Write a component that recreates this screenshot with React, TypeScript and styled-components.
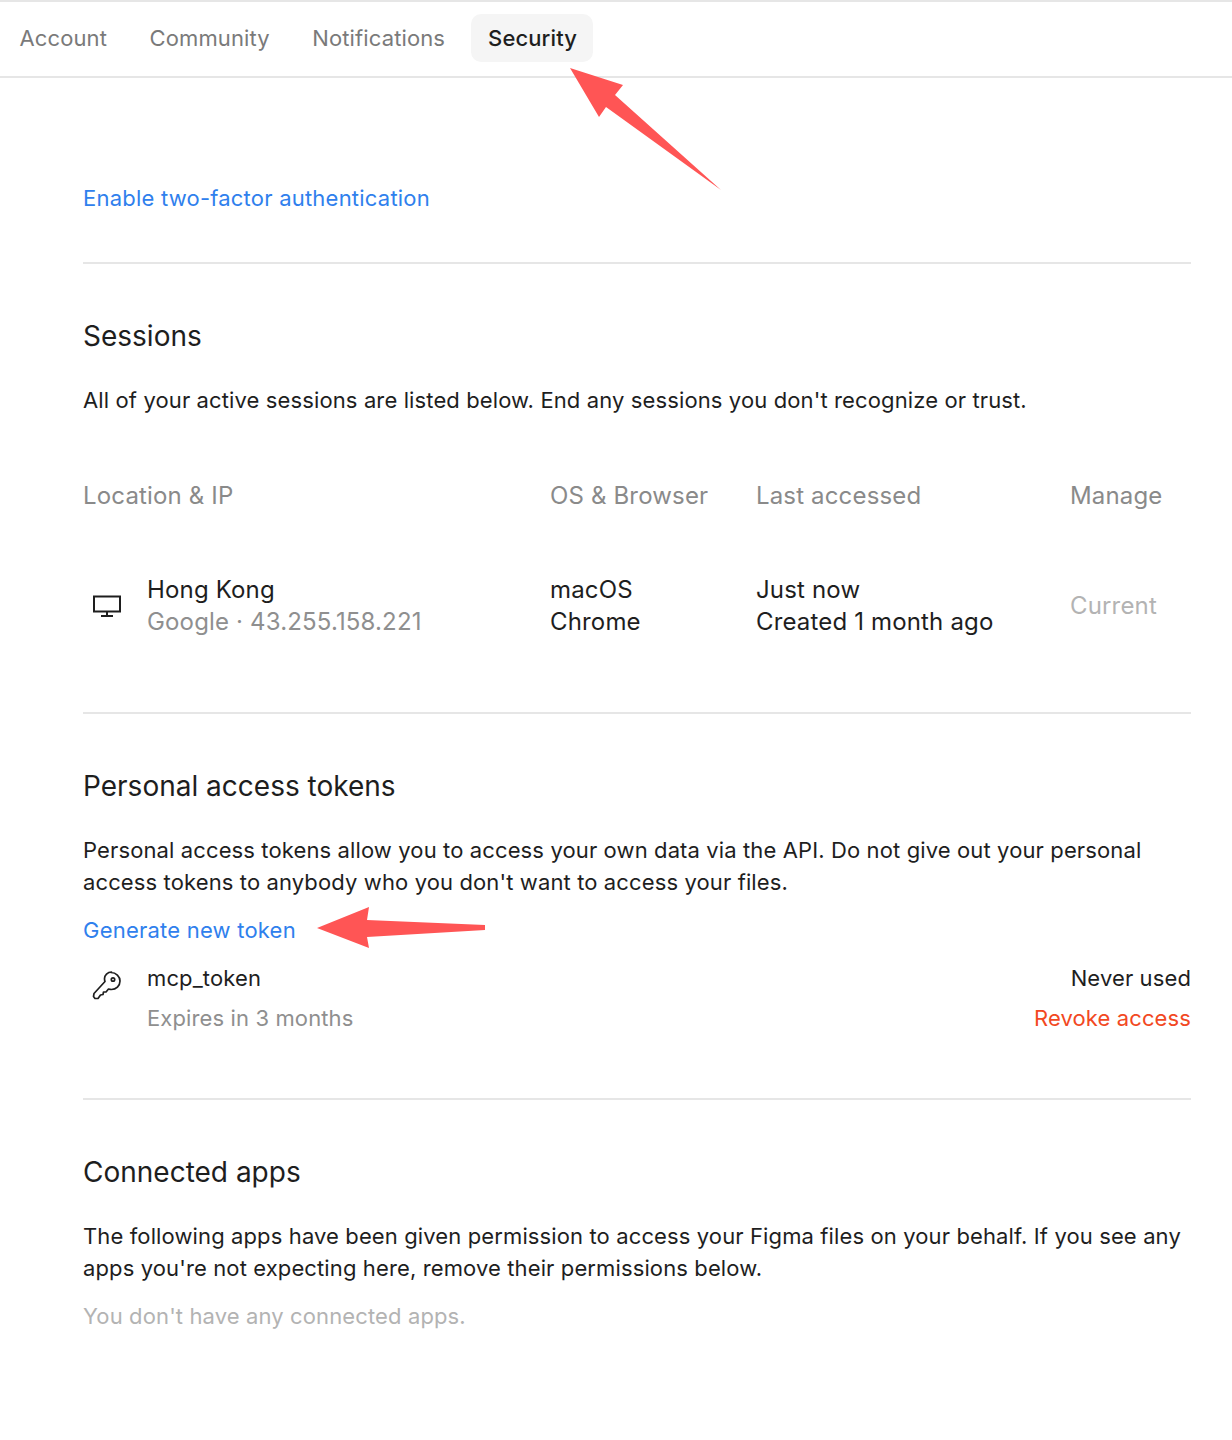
import React from 'react';
import styled, { createGlobalStyle } from 'styled-components';

const GlobalStyle = createGlobalStyle`
  html, body {
    margin: 0;
    background: #fff;
  }
  body {
    font-family: Inter, "Liberation Sans", sans-serif;
    color: #1e1e1e;
  }
`;

const Page = styled.div`
  position: relative;
  width: 1232px;
  height: 1440px;
  overflow: hidden;
  background: #fff;
  font-size: 22px;
  line-height: 32px;
  letter-spacing: 0.12px;
`;

const TabBar = styled.nav`
  display: flex;
  align-items: center;
  height: 74px;
  padding-left: 3px;
  border-top: 2px solid #e6e6e6;
  border-bottom: 2px solid #e6e6e6;
`;

const Tab = styled.div<{ $active?: boolean }>`
  display: flex;
  align-items: center;
  justify-content: center;
  height: 48px;
  margin-top: -2px;
  margin-right: ${(p) => (p.$active ? 0 : '9.5px')};
  padding: ${(p) => (p.$active ? '0 16px 0 17px' : '0 16.5px')};
  border-radius: 10px;
  background: ${(p) => (p.$active ? '#f5f5f5' : 'transparent')};
  color: ${(p) => (p.$active ? '#1e1e1e' : '#7a7a7a')};
  font-weight: ${(p) => (p.$active ? 500 : 400)};
`;

const Content = styled.main`
  margin: 0 41px 0 83px;
`;

const IntroSection = styled.section`
  padding: 104px 0 48px;
  border-bottom: 2px solid #e6e6e6;
`;

const Section = styled.section<{ $bottom?: number; $rule?: boolean }>`
  padding-top: 56px;
  padding-bottom: ${(p) => p.$bottom ?? 0}px;
  border-bottom: ${(p) => (p.$rule ? '2px solid #e6e6e6' : 'none')};
`;

const ActionLink = styled.a<{ $top?: number }>`
  display: block;
  margin-top: ${(p) => p.$top ?? 0}px;
  color: #2f80ed;
  letter-spacing: 0.22px;
`;

const Heading = styled.h2`
  margin: 0;
  font-size: 28px;
  line-height: 32px;
  font-weight: 400;
  letter-spacing: 0;
  color: #1e1e1e;
`;

const Copy = styled.p`
  margin: 32px 0 0;
  color: #1e1e1e;
`;

const SessionGrid = styled.div`
  display: grid;
  grid-template-columns: 467px 206px 314px 1fr;
  margin-top: 64px;
  font-size: 24px;
  letter-spacing: 0.16px;
`;

const ColumnLabel = styled.div`
  color: #8a8a8a;
  margin-bottom: 62px;
`;

const Entry = styled.div<{ $top?: boolean }>`
  display: flex;
  align-items: ${(p) => (p.$top ? 'flex-start' : 'center')};
  gap: 16px;
`;

const IconSlot = styled.div<{ $offset?: number }>`
  display: flex;
  justify-content: center;
  width: 48px;
  margin-top: ${(p) => p.$offset ?? 0}px;
  color: #1e1e1e;
`;

const Muted = styled.div`
  color: #8f8f8f;
`;

const Faint = styled.div<{ $top?: number }>`
  color: #b3b3b3;
  margin-top: ${(p) => p.$top ?? 0}px;
`;

const CenterCell = styled.div`
  display: flex;
  align-items: center;
  height: 64px;
`;

const TokenRow = styled.div`
  display: flex;
  justify-content: space-between;
  margin-top: 16px;
`;

const TokenLine = styled.div`
  height: 40px;
`;

const TokenNote = styled(TokenLine)`
  color: #8f8f8f;
`;

const TokenRevoke = styled(TokenLine)`
  color: #f24822;
`;

const RightText = styled.div`
  text-align: right;
`;

const Arrows = styled.svg`
  position: absolute;
  left: 0;
  top: 0;
  pointer-events: none;
`;

export default function App() {
  return (
    <Page>
      <GlobalStyle />
      <TabBar>
        <Tab>Account</Tab>
        <Tab>Community</Tab>
        <Tab>Notifications</Tab>
        <Tab $active>Security</Tab>
      </TabBar>
      <Content>
        <IntroSection>
          <ActionLink>Enable two-factor authentication</ActionLink>
        </IntroSection>
        <Section $bottom={74} $rule>
          <Heading>Sessions</Heading>
          <Copy>All of your active sessions are listed below. End any sessions you don't recognize or trust.</Copy>
          <SessionGrid>
            <ColumnLabel>Location &amp; IP</ColumnLabel>
            <ColumnLabel>OS &amp; Browser</ColumnLabel>
            <ColumnLabel>Last accessed</ColumnLabel>
            <ColumnLabel>Manage</ColumnLabel>
            <Entry>
              <IconSlot>
                <svg width="30" height="24" viewBox="0 0 30 24" fill="none" stroke="currentColor" strokeWidth="2">
                  <rect x="2" y="2.500" width="26" height="15" />
                  <path d="M15 17.500v4M9 22h12" />
                </svg>
              </IconSlot>
              <div>
                <div>Hong Kong</div>
                <Muted>Google · 43.255.158.221</Muted>
              </div>
            </Entry>
            <div>
              <div>macOS</div>
              <div>Chrome</div>
            </div>
            <div>
              <div>Just now</div>
              <div>Created 1 month ago</div>
            </div>
            <CenterCell>
              <Faint>Current</Faint>
            </CenterCell>
          </SessionGrid>
        </Section>
        <Section $bottom={56} $rule>
          <Heading>Personal access tokens</Heading>
          <Copy>
            Personal access tokens allow you to access your own data via the API. Do not give out your personal access
            tokens to anybody who you don't want to access your files.
          </Copy>
          <ActionLink $top={16}>Generate new token</ActionLink>
          <TokenRow>
            <Entry $top>
              <IconSlot $offset={9}>
                <svg width="30" height="30" viewBox="0 0 30 30" fill="none" stroke="currentColor" strokeWidth="1.7" strokeLinejoin="round">
                  <path d="M19 1.500c5 0 9 4 9 8.500 0 5-4 8.500-8.500 8.500-1 0-2-.2-3-.5l-2.500 3h-2.500l-.5 2.500-2.500.5-2.500 3.500H3l-1.500-2 .5-3 11-12c-.5-1-.5-2-.5-3 0-3 3-6.500 7-6.500z" />
                  <circle cx="21" cy="8.500" r="1.700" />
                </svg>
              </IconSlot>
              <div>
                <TokenLine>mcp_token</TokenLine>
                <TokenNote>Expires in 3 months</TokenNote>
              </div>
            </Entry>
            <RightText>
              <TokenLine>Never used</TokenLine>
              <TokenRevoke>Revoke access</TokenRevoke>
            </RightText>
          </TokenRow>
        </Section>
        <Section>
          <Heading>Connected apps</Heading>
          <Copy>
            The following apps have been given permission to access your Figma files on your behalf. If you see any apps
            you're not expecting here, remove their permissions below.
          </Copy>
          <Faint $top={16}>You don't have any connected apps.</Faint>
        </Section>
      </Content>
      <Arrows width="1232" height="1440" viewBox="0 0 1232 1440">
        <path d="M570 68L623 85 615 95 721 190 606 107 599 117z" fill="#ff5555" />
        <path d="M317 928L369 907 367 920 485 925 485 930 367 937 369 948z" fill="#ff5555" />
      </Arrows>
    </Page>
  );
}
